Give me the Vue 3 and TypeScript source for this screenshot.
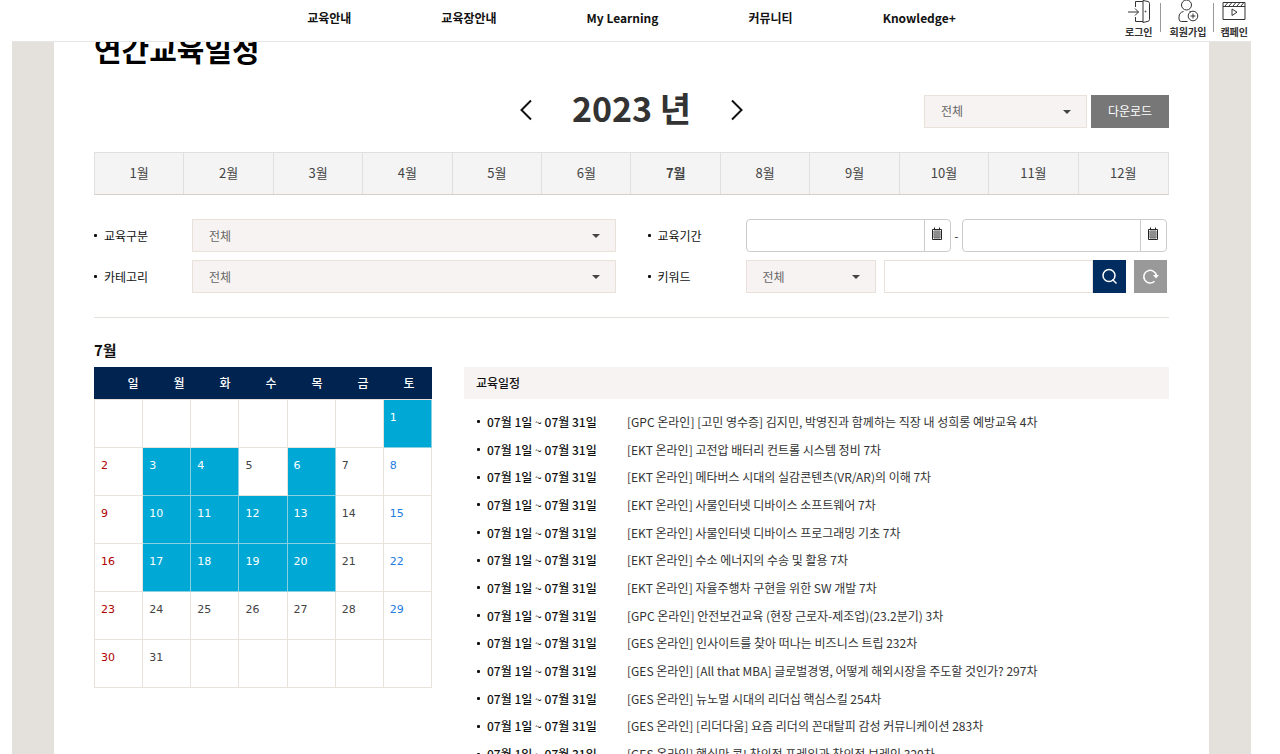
<script setup lang="ts">
import { ref } from 'vue'

interface Course {
  period: string
  title: string
}

interface Day {
  label: string
  kind: string
}

const menu: string[] = ['교육안내', '교육장안내', 'My Learning', '커뮤니티', 'Knowledge+']
const months: number[] = Array.from({ length: 12 }, (_, i) => i + 1)
const weekdays: string[] = ['일', '월', '화', '수', '목', '금', '토']

const year = ref(2023)
const month = ref(7)
const startDate = ref('')
const endDate = ref('')
const keyword = ref('')

const busy = new Set<number>([1, 3, 4, 6, 10, 11, 12, 13, 17, 18, 19, 20])
const firstWeekday = 6
const dayCount = 31

const weeks: Day[][] = Array.from({ length: 6 }, (_, w) =>
  Array.from({ length: 7 }, (_, d) => {
    const n = w * 7 + d - firstWeekday + 1
    if (n < 1 || n > dayCount) return { label: '', kind: '' }
    let kind = ''
    if (busy.has(n)) kind = 'busy'
    else if (d === 0) kind = 'sunday'
    else if (d === 6) kind = 'saturday'
    return { label: String(n), kind }
  })
)

const period = '07월 1일 ~ 07월 31일'
const courses: Course[] = [
  '[GPC 온라인] [고민 영수증] 김지민, 박영진과 함께하는 직장 내 성희롱 예방교육 4차',
  '[EKT 온라인] 고전압 배터리 컨트롤 시스템 정비 7차',
  '[EKT 온라인] 메타버스 시대의 실감콘텐츠(VR/AR)의 이해 7차',
  '[EKT 온라인] 사물인터넷 디바이스 소프트웨어 7차',
  '[EKT 온라인] 사물인터넷 디바이스 프로그래밍 기초 7차',
  '[EKT 온라인] 수소 에너지의 수송 및 활용 7차',
  '[EKT 온라인] 자율주행차 구현을 위한 SW 개발 7차',
  '[GPC 온라인] 안전보건교육 (현장 근로자-제조업)(23.2분기) 3차',
  '[GES 온라인] 인사이트를 찾아 떠나는 비즈니스 트립 232차',
  '[GES 온라인] [All that MBA] 글로벌경영, 어떻게 해외시장을 주도할 것인가? 297차',
  '[GES 온라인] 뉴노멀 시대의 리더십 핵심스킬 254차',
  '[GES 온라인] [리더다움] 요즘 리더의 꼰대탈피 감성 커뮤니케이션 283차',
  '[GES 온라인] 핵심만 콕! 창의적 프레임과 창의적 브레인 320차'
].map((title) => ({ period, title }))
</script>

<template>
  <div class="page">
    <header class="topbar">
      <nav class="menu">
        <a v-for="item in menu" :key="item" href="#">{{ item }}</a>
      </nav>
      <div class="shortcuts">
        <a href="#">
          <svg width="26" height="24" viewBox="0 0 26 24">
            <path d="M9.500 7V1.500H17M9.500 17V21.500H17M17 0.500L22 1.500Q23.500 2 23.500 3.500V19.500Q23.500 21 22 21.300L17 22.500ZM2 12H12.500M9 8.500L12.500 12L9 15.500" />
            <circle cx="19.500" cy="11.500" r="0.500" />
          </svg>
          <span>로그인</span>
        </a>
        <a href="#">
          <svg width="26" height="24" viewBox="0 0 26 24">
            <circle cx="11.500" cy="5" r="5" />
            <path d="M12.500 21.500H6.500Q4 21.500 4 19V17Q4 12.500 8.500 11.500M14.500 11.500L16 12M18 13.500V18.500M15.500 16H20.500" />
            <circle cx="18" cy="16" r="4.800" />
          </svg>
          <span>회원가입</span>
        </a>
        <a href="#">
          <svg width="26" height="24" viewBox="0 0 26 24">
            <path d="M2 2.500H24V19.500H2ZM2 6.500H24M4 6L6.500 3M8 6L10.500 3M12 6L14.500 3M16 6L18.500 3M20 6L22.500 3M11 9V15.500L16 12.200Z" />
          </svg>
          <span>캠페인</span>
        </a>
      </div>
    </header>

    <main class="content">
      <h1>연간교육일정</h1>

      <div class="year-row">
        <div class="year">
          <button type="button" aria-label="이전 연도" @click="year--">
            <svg width="14" height="24" viewBox="0 0 14 24"><path d="M12 2.500L2.500 12L12 21.500" /></svg>
          </button>
          <h2>{{ year }} 년</h2>
          <button type="button" aria-label="다음 연도" @click="year++">
            <svg width="14" height="24" viewBox="0 0 14 24"><path d="M2 2.500L11.500 12L2 21.500" /></svg>
          </button>
        </div>
        <div class="download">
          <span class="select">
            <select aria-label="다운로드 구분"><option>전체</option></select>
          </span>
          <button type="button">다운로드</button>
        </div>
      </div>

      <div class="months">
        <button
          v-for="m in months"
          :key="m"
          type="button"
          :class="{ current: m === month }"
          @click="month = m"
        >{{ m }}월</button>
      </div>

      <form class="filters" @submit.prevent>
        <label for="division">교육구분</label>
        <span class="select">
          <select id="division"><option>전체</option></select>
        </span>

        <label for="start" class="second">교육기간</label>
        <div class="fields">
          <span class="date">
            <input id="start" v-model="startDate" type="text">
            <button type="button" aria-label="시작일 선택">
              <svg width="12" height="14" viewBox="0 0 12 14">
                <path class="frame" d="M1.500 2.500H10.500V12.500H1.500ZM3.500 0.500V2M8.500 0.500V2" />
                <path class="cells" d="M3 4H9V11H3ZM5 4V11M7 4V11M3 6H9M3 8H9M3 10H9" />
              </svg>
            </button>
          </span>
          <span class="dash">-</span>
          <span class="date">
            <input v-model="endDate" type="text" aria-label="종료일">
            <button type="button" aria-label="종료일 선택">
              <svg width="12" height="14" viewBox="0 0 12 14">
                <path class="frame" d="M1.500 2.500H10.500V12.500H1.500ZM3.500 0.500V2M8.500 0.500V2" />
                <path class="cells" d="M3 4H9V11H3ZM5 4V11M7 4V11M3 6H9M3 8H9M3 10H9" />
              </svg>
            </button>
          </span>
        </div>

        <label for="category">카테고리</label>
        <span class="select">
          <select id="category"><option>전체</option></select>
        </span>

        <label for="keyword" class="second">키워드</label>
        <div class="fields">
          <span class="select scope">
            <select aria-label="키워드 구분"><option>전체</option></select>
          </span>
          <input id="keyword" v-model="keyword" class="keyword" type="text">
          <button type="submit" class="search" aria-label="검색">
            <svg width="17" height="17" viewBox="0 0 17 17">
              <circle cx="8" cy="7.500" r="6" />
              <path d="M11.500 11.500L15.500 15.500" />
            </svg>
          </button>
          <button type="reset" class="reset" aria-label="초기화">
            <svg width="17" height="17" viewBox="0 0 17 17">
              <path d="M12.500 13.200A6.300 6.300 0 1 1 14.300 7.500" />
              <path class="tip" d="M11 7H17L14 10.500Z" />
            </svg>
          </button>
        </div>
      </form>

      <h3>{{ month }}월</h3>
      <div class="schedule">
        <table class="calendar">
          <thead>
            <tr><th v-for="d in weekdays" :key="d" scope="col">{{ d }}</th></tr>
          </thead>
          <tbody>
            <tr v-for="(week, w) in weeks" :key="w">
              <td v-for="(day, d) in week" :key="d" :class="day.kind">{{ day.label }}</td>
            </tr>
          </tbody>
        </table>

        <section class="courses">
          <h4>교육일정</h4>
          <ul>
            <li v-for="course in courses" :key="course.title">
              <span class="period">{{ course.period }}</span>
              <a href="#">{{ course.title }}</a>
            </li>
          </ul>
        </section>
      </div>
    </main>
  </div>
</template>

<style>
body {
  margin: 0;
  background: #fff;
}
</style>

<style scoped>
.page {
  box-sizing: border-box;
  height: 100vh;
  overflow: hidden;
  padding: 0 29px 0 12px;
  font-family: "Noto Sans CJK KR", "Noto Sans", sans-serif;
  font-size: 12px;
  line-height: 18px;
  color: #333;
}

.page *,
.page *::before {
  box-sizing: border-box;
}

a {
  color: inherit;
  text-decoration: none;
}

button,
input,
select {
  margin: 0;
  padding: 0;
  border: 0;
  border-radius: 0;
  background: none;
  font: inherit;
  color: inherit;
}

button {
  cursor: pointer;
}

svg {
  display: block;
  fill: none;
  stroke: #333;
}

h1,
h2,
h3,
h4,
ul {
  margin: 0;
  padding: 0;
}

.topbar {
  position: sticky;
  top: 0;
  z-index: 2;
  display: grid;
  grid-template-columns: 1fr auto 1fr;
  height: 42px;
  border-bottom: 1px solid #e6e6e6;
  background: #fff;
}

.menu {
  grid-column: 2;
  display: flex;
  gap: 90px;
  padding-top: 9px;
  font-weight: 700;
  color: #111;
}

.shortcuts {
  display: flex;
  justify-content: flex-end;
}

.shortcuts a {
  display: flex;
  flex-direction: column;
  align-items: center;
  font-size: 10px;
  line-height: 16px;
  font-weight: 700;
}

.shortcuts a + a {
  margin-left: 7px;
  padding-left: 10px;
  background: linear-gradient(#999, #999) 0 3px / 1px 29px no-repeat;
}

.shortcuts a:last-child {
  padding: 0 3px 0 7px;
}

.content {
  padding: 0 40px;
  border: solid #e4e0dc;
  border-width: 0 42px;
}

h1 {
  margin-top: -14px;
  font-size: 30px;
  line-height: 40px;
  font-weight: 700;
  color: #000;
}

.year-row {
  display: grid;
  grid-template-columns: 1fr auto 1fr;
  align-items: center;
  height: 60px;
  margin-top: 12px;
}

.year {
  grid-column: 2;
  display: flex;
  align-items: center;
  gap: 39px;
}

.year svg {
  stroke: #111;
  stroke-width: 2;
}

h2 {
  padding-bottom: 4px;
  font-size: 34px;
  line-height: 44px;
  font-weight: 700;
}

.download {
  display: grid;
  grid-template-columns: 163px 78px;
  justify-content: end;
  gap: 4px;
  padding-top: 2px;
}

.download button {
  background: #777;
  color: #fff;
}

.select {
  position: relative;
  display: block;
  height: 33px;
}

.select::before {
  content: "";
  position: absolute;
  top: 15px;
  right: 16px;
  border: 4px solid transparent;
  border-top-color: #444;
  border-bottom: 0;
  pointer-events: none;
}

.select select {
  display: block;
  width: 100%;
  height: 100%;
  padding: 0 16px;
  border: 1px solid #eae1da;
  background: #f7f3f2;
  color: #666;
  appearance: none;
}

.months {
  display: grid;
  grid-template-columns: repeat(12, 1fr);
  height: 43px;
  margin-top: 12px;
  border: 1px solid #e0e0e0;
  border-bottom-color: #d8d0ca;
  background: #f4f4f4;
  font-size: 13px;
  color: #444;
}

.months button {
  padding-bottom: 2px;
}

.months button:not(:last-child) {
  border-right: 1px solid #e0e0e0;
}

.months .current {
  font-weight: 700;
}

.filters {
  display: grid;
  grid-template-columns: 98px 1fr 130px 1fr;
  align-items: center;
  row-gap: 8px;
  padding: 24px 0;
  border-bottom: 1px solid #e4e0dc;
}

.filters label {
  display: flex;
  align-items: center;
  color: #111;
}

.filters label::before,
.period::before {
  content: "";
  width: 3px;
  height: 3px;
  margin-right: 7px;
  border-radius: 1px;
  background: #111;
}

.filters .second {
  padding-left: 32px;
}

.fields {
  display: flex;
  align-items: center;
  height: 33px;
  padding-right: 2px;
}

.date {
  flex: 1;
  display: flex;
  height: 33px;
  border: 1px solid #ccc;
  border-radius: 4px;
}

.date input {
  flex: 1;
  min-width: 0;
  padding: 0 8px;
}

.date button {
  width: 26px;
  padding: 0 0 4px 6px;
  border-left: 1px solid #ccc;
}

.date .frame {
  stroke: #222;
}

.date .cells {
  stroke: #666;
}

.dash {
  width: 11px;
  text-align: center;
}

.scope {
  width: 130px;
  margin-right: 8px;
}

.keyword {
  flex: 1;
  min-width: 0;
  height: 33px;
  padding: 0 8px;
  border: 1px solid #eae1da;
}

.search,
.reset {
  display: grid;
  place-items: center;
  width: 33px;
  height: 33px;
  background: #002c5f;
}

.reset {
  margin-left: 8px;
  background: #999;
}

.search svg,
.reset svg {
  stroke: #fff;
  stroke-width: 1.5;
}

.reset .tip {
  fill: #fff;
  stroke: none;
}

h3 {
  margin-top: 20px;
  font-size: 15px;
  line-height: 24px;
  font-weight: 700;
  color: #111;
}

.schedule {
  display: grid;
  grid-template-columns: 338px 1fr;
  align-items: start;
  gap: 32px;
  margin-top: 5px;
}

.calendar,
.calendar thead,
.calendar tbody {
  display: block;
}

.calendar tr {
  display: grid;
  grid-template-columns: repeat(7, 1fr);
}

.calendar thead tr {
  padding-left: 16px;
  background: #002350;
  line-height: 32px;
  color: #fff;
}

.calendar th {
  padding: 0;
  font-weight: 500;
}

.calendar tbody {
  border: solid #e8e2dc;
  border-width: 1px 0 0 1px;
}

.calendar td {
  height: 48px;
  padding: 9px 6px;
  border: solid #e8e2dc;
  border-width: 0 1px 1px 0;
  font-family: "DejaVu Sans", sans-serif;
  font-size: 11px;
  color: #444;
}

.calendar .sunday {
  color: #b00000;
}

.calendar .saturday {
  color: #1e7be0;
}

.calendar .busy {
  border-color: #8ccfe0;
  background: #00a9d5;
  color: #fff;
}

h4 {
  padding: 0 12px;
  background: #f7f3f2;
  font-size: 12px;
  line-height: 32px;
  font-weight: 500;
  color: #111;
}

.courses ul {
  display: grid;
  grid-auto-rows: 1fr;
  min-height: 360px;
  margin-top: 9px;
  list-style: none;
}

.courses li {
  display: grid;
  grid-template-columns: 150px 1fr;
  align-items: center;
  padding-left: 13px;
}

.period {
  display: flex;
  align-items: center;
  font-weight: 500;
  color: #111;
}
</style>
